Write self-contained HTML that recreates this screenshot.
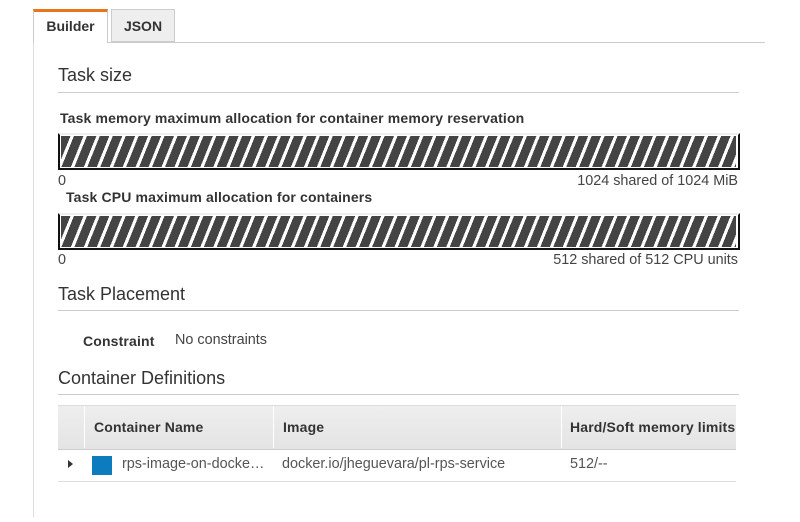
<!DOCTYPE html>
<html><head><style>
body{margin:0;width:800px;height:522px;background:#fff;font-family:"Liberation Sans",Arial,sans-serif;color:#333;position:relative;overflow:hidden}
.abs{position:absolute}
.tab{position:absolute;top:9px;height:33px;box-sizing:border-box;font-weight:bold;font-size:14px;text-align:center;line-height:32px}
.bar{position:absolute;left:58px;width:682px;height:37px;box-sizing:border-box;border:2px solid #111;border-top:2px solid #eee;padding:1px 2px 1px 1px;background:#fff}
.bar div{width:100%;height:100%;background:repeating-linear-gradient(112deg,#444 0,#444 8.8px,#fff 8.8px,#fff 12px)}
.h{position:absolute;left:58px;font-size:18px;color:#333}
.line{position:absolute;left:58px;width:681px;height:1px;background:#ccc}
.lbl{position:absolute;font-size:14px;font-weight:bold;color:#333;letter-spacing:0.15px}
.sm{position:absolute;font-size:14.4px;color:#444}
</style></head><body>
<div class="abs" style="left:33px;top:42px;width:732px;height:1px;background:#ccc"></div>
<div class="abs" style="left:33px;top:42px;width:1px;height:475px;background:#ddd"></div>
<div class="tab" style="left:33px;width:75px;background:#fff;border:1px solid #ccc;border-bottom:none;border-top:3px solid #e8741c;line-height:29px;height:34px">Builder</div>
<div class="tab" style="left:111px;width:64px;background:#eee;border:1px solid #ccc">JSON</div>

<div class="h" style="top:65px">Task size</div>
<div class="line" style="top:92px"></div>
<div class="lbl" style="left:60px;top:110px">Task memory maximum allocation for container memory reservation</div>
<div class="bar" style="top:133px"><div></div></div>
<div class="sm" style="left:58px;top:173px">0</div>
<div class="sm" style="right:62px;top:173px">1024 shared of 1024 MiB</div>
<div class="lbl" style="left:66px;top:189px">Task CPU maximum allocation for containers</div>
<div class="bar" style="top:213px"><div></div></div>
<div class="sm" style="left:58px;top:252px">0</div>
<div class="sm" style="right:62px;top:252px">512 shared of 512 CPU units</div>

<div class="h" style="top:284px">Task Placement</div>
<div class="line" style="top:310px"></div>
<div class="lbl" style="left:83px;top:333px">Constraint</div>
<div class="sm" style="left:175px;top:332px">No constraints</div>

<div class="h" style="top:368px">Container Definitions</div>
<div class="line" style="top:394px"></div>

<div class="abs" style="left:58px;top:405px;width:678px;height:43px;background:linear-gradient(#eee,#e4e4e4);border-top:1px solid #ddd;border-bottom:1px solid #ccc"></div>
<div class="abs" style="left:84px;top:406px;width:1px;height:42px;background:#fff"></div>
<div class="abs" style="left:273px;top:406px;width:1px;height:42px;background:#fff"></div>
<div class="abs" style="left:561px;top:406px;width:1px;height:42px;background:#fff"></div>
<div class="lbl" style="left:94px;top:419px">Container Name</div>
<div class="lbl" style="left:283px;top:419px">Image</div>
<div class="lbl" style="left:570px;top:419px">Hard/Soft memory limits</div>
<div class="abs" style="left:68px;top:460px;width:0;height:0;border-left:5px solid #333;border-top:4px solid transparent;border-bottom:4px solid transparent"></div>
<div class="abs" style="left:92px;top:456px;width:20px;height:19px;background:#0d7cbf"></div>
<div class="sm" style="left:122px;top:456px;color:#555">rps-image-on-docke…</div>
<div class="sm" style="left:282px;top:456px;color:#555">docker.io/jheguevara/pl-rps-service</div>
<div class="sm" style="left:570px;top:456px;color:#555">512/--</div>
<div class="abs" style="left:58px;top:481px;width:678px;height:1px;background:#ddd"></div>
</body></html>
